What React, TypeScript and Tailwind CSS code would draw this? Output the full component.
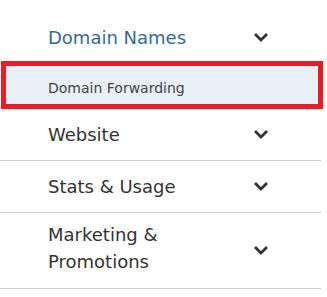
import React from 'react';

function Chevron() {
  return (
    <svg width="14" height="10" viewBox="0 0 14 10" className="flex-shrink-0">
      <polyline points="2,2 7,7 12,2" fill="none" stroke="#333333" strokeWidth="2.8" strokeLinecap="square" />
    </svg>
  );
}

const rows = [
  { label: 'Website', h: 'h-[52px]', text: '' },
  { label: 'Stats & Usage', h: 'h-[52px]', text: '' },
  { label: 'Marketing &\nPromotions', h: 'h-[76px]', text: 'mb-[6px]' },
];

export default function App() {
  return (
    <div className="w-[327px] h-[297px] bg-white font-['DejaVu_Sans',sans-serif] overflow-hidden">
      <div className="w-[321px]">
        <div className="h-[61px] flex items-center pl-[48px] pr-[53px] pt-[15px]">
          <span className="text-[18px] text-[#36699b] leading-none">Domain Names</span>
          <span className="ml-auto">
            <Chevron />
          </span>
        </div>

        <div className="ml-[1px] w-[322px] h-[48px] border-[5px] border-[#ec1c24] bg-[#e9eff7] flex items-center pl-[42px] pt-[5px]">
          <span className="text-[14px] text-[#444444] leading-none">Domain Forwarding</span>
        </div>

        {rows.map((row) => (
          <div
            key={row.label}
            className={`${row.h} flex items-center pl-[48px] pr-[53px] border-b border-[#cccccc]`}
          >
            <span className={`text-[18px] text-[#333333] leading-[27px] whitespace-pre-line ${row.text}`}>
              {row.label}
            </span>
            <span className="ml-auto">
              <Chevron />
            </span>
          </div>
        ))}
      </div>
    </div>
  );
}
